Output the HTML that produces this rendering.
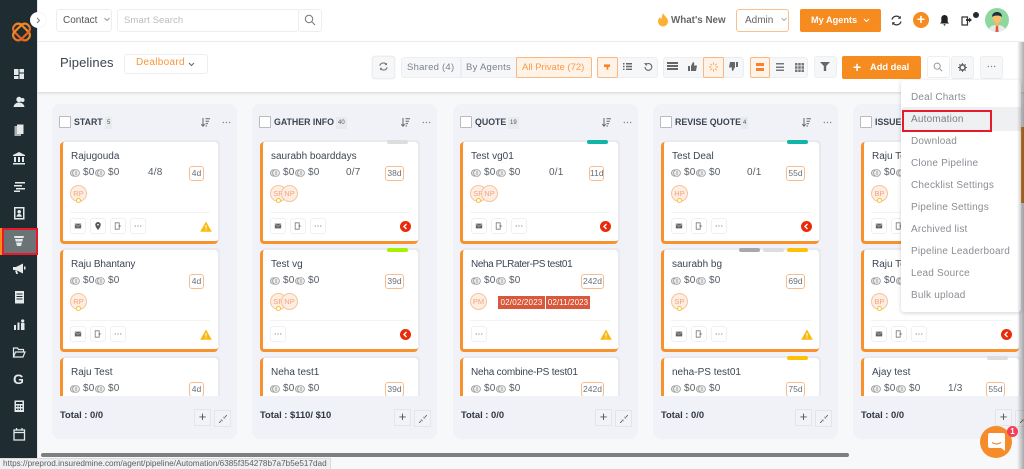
<!DOCTYPE html>
<html><head><meta charset="utf-8"><title>Pipelines</title>
<style>
*{box-sizing:border-box}
html,body{margin:0;padding:0;width:1024px;height:469px;overflow:hidden;background:#f7f8fa;font-family:"Liberation Sans",sans-serif;color:#3b4450}
.a{position:absolute}
.t{position:absolute;white-space:nowrap;line-height:1}
#side{left:0;top:0;width:37px;height:458px;background:#1f2d33}
.si{position:absolute;left:12px;width:14px;height:14px;fill:#e6e9ea}
.box{position:absolute;background:#fff;border:1px solid #eceef1;border-radius:3px}
.tb{position:absolute;background:#f6f7f9;border:1px solid #eceef1}
.on{background:#fff3e8;border:1px solid #f9b783;border-radius:2px}
.col{position:absolute;top:104px;width:185px;height:335px;background:#f0f2f7;border-radius:8px}
.cb{position:absolute;left:7px;top:12px;width:12px;height:12px;background:#fff;border:1px solid #b8bcc2;border-radius:1px}
.h{position:absolute;left:22px;top:14px;font-size:8.8px;font-weight:bold;line-height:1;white-space:nowrap;color:#3b4652}
.n{position:absolute;top:13px;font-size:6px;background:#e8eaee;padding:3px 2px;line-height:1;color:#555}
.clip{position:absolute;left:0;top:36px;width:185px;height:256px;overflow:hidden}
.card{position:absolute;left:8px;width:158px;height:102px;background:#fff;border-left:3px solid #f7922f;border-bottom:3px solid #f7922f;border-radius:4px;box-shadow:2px -2px 0 #e8eaef}
.card.l{border-bottom:0;height:120px}
.card b{position:absolute;left:8px;top:10px;font-weight:normal;font-size:10px;line-height:1;white-space:nowrap;color:#3c4654}
.c{position:absolute;top:26px;width:10px;height:10px}
.d{position:absolute;top:26px;font-size:10px;letter-spacing:.2px;line-height:1;color:#555d67}
.bd{position:absolute;top:24px;height:15px;right:14px;border:1px solid #f9bd8c;border-radius:3px;font-size:8.5px;line-height:13px;text-align:center;color:#68707a;background:#fff}
.av{position:absolute;top:43px;width:17px;height:17px;border-radius:50%;background:#fdeee3;border:1px solid #f9c39a;color:#f8a07a;font-size:7.5px;line-height:15px;text-align:center}
.yd{position:absolute;top:56px;width:5px;height:5px;border-radius:50%;border:1px solid #fbc02d;background:#fff}
.ln{position:absolute;left:7px;right:8px;top:70px;height:1px;background:#f2f3f5}
.ib{position:absolute;top:76px;width:16px;height:16px;background:#fff;border:1px solid #eff0f2;border-radius:3px}
.ib svg{position:absolute;left:3px;top:3px;width:8px;height:8px}
.wn{position:absolute;left:137px;top:79px;width:12px;height:11px}
.bk{position:absolute;left:137px;top:79px;width:11px;height:11px}
.st{position:absolute;top:-2px;width:21px;height:4px;border-radius:2px}
.tot{position:absolute;left:8px;top:306px;font-size:9.4px;font-weight:bold;line-height:1;white-space:nowrap;color:#2f3742}
.fb{position:absolute;width:17px;height:17px;border:1px solid #e3e5e9;background:#f2f3f6;text-align:center;color:#555;font-size:13px;line-height:14px}
.fb svg{position:absolute;left:4px;top:4px;width:8px;height:8px}
.so{position:absolute;left:149px;top:14px;width:9px;height:9px}
.dt{position:absolute;left:170px;top:14px;width:9px;height:9px}
.mi{position:absolute;left:10px;font-size:10px;letter-spacing:.2px;color:#8a8e94;line-height:1;white-space:nowrap}
.tg{position:absolute;font-size:9.5px;letter-spacing:.25px;line-height:1;white-space:nowrap;color:#7b828b}
</style></head><body>
<svg width="0" height="0" style="position:absolute"><defs>
<symbol id="coin" viewBox="0 0 10 10"><circle cx="3.6" cy="5" r="3.2" fill="#ddd" stroke="#9a9a9a" stroke-width=".8"/><circle cx="6" cy="5" r="3.4" fill="#eee" stroke="#9a9a9a" stroke-width=".8"/><path d="M6 3v4" stroke="#888" stroke-width=".8"/></symbol>
<symbol id="mail" viewBox="0 0 10 10"><path d="M1 2h8v6H1z" fill="#666"/><path d="M1 2.5l4 3 4-3" stroke="#fff" stroke-width=".5" fill="none"/></symbol>
<symbol id="pin" viewBox="0 0 10 10"><path d="M5 0a3.4 3.4 0 013.4 3.4C8.4 6 5 10 5 10S1.600 6 1.600 3.400A3.400 3.400 0 015 0z" fill="#555"/><circle cx="5" cy="3.400" r="1.100" fill="#fff"/></symbol>
<symbol id="door" viewBox="0 0 10 10"><path d="M1.500 1h5v8h-5z" fill="none" stroke="#777" stroke-width="1"/><path d="M6 3.500l3 1.500-3 1.500z" fill="#777"/></symbol>
<symbol id="dots" viewBox="0 0 10 10"><circle cx="1.500" cy="5" r=".8" fill="#888"/><circle cx="5" cy="5" r=".8" fill="#888"/><circle cx="8.500" cy="5" r=".8" fill="#888"/></symbol>
<symbol id="warn" viewBox="0 0 12 11"><path d="M6 .5L11.800 10.800H.2z" fill="#fbb80f"/><path d="M5.500 4h1v3.500h-1zM5.500 8.300h1v1h-1z" fill="#fff"/></symbol>
<symbol id="back" viewBox="0 0 11 11"><circle cx="5.500" cy="5.500" r="5.500" fill="#ea2b0a"/><path d="M6.500 3L4 5.500 6.500 8" stroke="#fff" stroke-width="1.400" fill="none"/></symbol>
<symbol id="sort" viewBox="0 0 9 9"><path d="M2 0v8M.3 6.200L2 8.200l1.700-2M4.500 .8H9M4.500 3.200H8M4.500 5.600H7M4.500 8H6" stroke="#666" stroke-width="1" fill="none"/></symbol>
<symbol id="cmp" viewBox="0 0 8 8"><path d="M8 0L6 2M0 8l2-2" stroke="#666" stroke-width=".9"/><path d="M4.600 3.400V1.400L6.600 3.400zM3.400 4.600V6.600L1.400 4.600z" fill="#666"/></symbol>
</defs></svg>

<!-- top bar -->
<div class="a" style="left:37px;top:0;width:987px;height:42px;background:#fff;border-bottom:1px solid #f1f2f4"></div>
<div class="box" style="left:56px;top:9px;width:56px;height:23px"></div>
<div class="t" style="left:63px;top:16px;font-size:10px;color:#555">Contact</div>
<svg class="a" style="left:104px;top:17px" width="6" height="5"><path d="M.5 1l2.500 2.500L5.500 1" stroke="#999" fill="none"/></svg>
<div class="box" style="left:117px;top:9px;width:182px;height:23px"></div>
<div class="t" style="left:124px;top:16px;font-size:9.5px;letter-spacing:.1px;color:#b8bbbf">Smart Search</div>
<div class="box" style="left:298px;top:9px;width:24px;height:23px"></div>
<svg class="a" style="left:304px;top:14px" width="12" height="12" viewBox="0 0 12 12"><circle cx="5" cy="5" r="3.700" stroke="#777" fill="none"/><path d="M7.800 7.800L11 11" stroke="#777"/></svg>

<svg class="a" style="left:657px;top:13px" width="12" height="14" viewBox="0 0 12 14"><path d="M6 0c1 3 5 4.500 5 8.500A5 5 0 011 8.500C1 6.500 2 5.500 3 4c.3 1 .8 1.500 1.500 2C5 4 5 2 6 0z" fill="#fbb034"/></svg>
<div class="t" style="left:671px;top:16px;font-size:9.8px;font-weight:bold;color:#666">What's New</div>
<div class="box" style="left:736px;top:9px;width:53px;height:23px;border-color:#f9c08e"></div>
<div class="t" style="left:745px;top:16px;font-size:10px;color:#666">Admin</div>
<svg class="a" style="left:781px;top:17px" width="6" height="5"><path d="M.5 1l2.500 2.500L5.500 1" stroke="#aaa" fill="none"/></svg>
<div class="a" style="left:800px;top:9px;width:81px;height:23px;background:#f68b1f;border-radius:2px"></div>
<div class="t" style="left:811px;top:16px;font-size:9.2px;font-weight:bold;color:#fff">My Agents</div>
<svg class="a" style="left:863px;top:18px" width="7" height="5"><path d="M1 1l2.500 2.500L6 1" stroke="#fff" fill="none"/></svg>
<svg class="a" style="left:891px;top:15px" width="11" height="11" viewBox="0 0 11 11"><path d="M1 4.500A4.500 4.500 0 019 3M10 6.500A4.500 4.500 0 012 8" stroke="#333" stroke-width="1.300" fill="none"/><path d="M9.800 .8v3h-3zM1.200 10.200v-3h3z" fill="#333"/></svg>
<div class="a" style="left:913px;top:12px;width:16px;height:16px;border-radius:50%;background:#f68b1f;color:#fff;font-size:14px;line-height:15px;text-align:center;font-weight:bold">+</div>
<svg class="a" style="left:940px;top:15px" width="9" height="11" viewBox="0 0 9 11"><path d="M4.500 0a3.200 3.200 0 013.200 3.200V7L9 8.500H0L1.300 7V3.200A3.200 3.200 0 014.500 0zM3.300 9.300h2.400L4.500 11z" fill="#222"/></svg>
<svg class="a" style="left:961px;top:15px" width="11" height="11" viewBox="0 0 11 11"><path d="M1 2h5.500v8H1z" fill="none" stroke="#333" stroke-width="1.200"/><path d="M5 4h3V2.500L11 5 8 7.500V6H5z" fill="#333"/></svg>
<div class="a" style="left:973px;top:12px;width:6px;height:6px;border-radius:50%;background:#1d2b36"></div>
<svg class="a" style="left:985px;top:8px" width="24" height="24" viewBox="0 0 24 24"><defs><clipPath id="ac"><circle cx="12" cy="12" r="12"/></clipPath></defs><g clip-path="url(#ac)"><rect width="24" height="24" fill="#8ed8a0"/><path d="M3 24c1-6 5-7 9-7s8 1 9 7z" fill="#e8ebee"/><path d="M11 17h2l.600 7h-3.200z" fill="#e4573d"/><rect x="10" y="13" width="4" height="5" fill="#f4b860"/><circle cx="12" cy="10" r="4.500" fill="#f8c06c"/><path d="M7 9c0-4 3-5 5-5s5 1 5 5c-2-2-8-2-10 0z" fill="#1e3042"/></g></svg>

<!-- sub header -->
<div class="a" style="left:37px;top:42px;width:987px;height:50px;background:#fff;box-shadow:0 1px 3px rgba(0,0,0,.15)"></div>
<div class="t" style="left:60px;top:56px;font-size:13px;letter-spacing:.1px;color:#3a434e">Pipelines</div>
<div class="box" style="left:124px;top:54px;width:84px;height:20px"></div>
<div class="t" style="left:136px;top:58px;font-size:10px;letter-spacing:.3px;color:#f9943b">Dealboard</div>
<svg class="a" style="left:188px;top:62px" width="7" height="5"><path d="M1 1l2.500 2.500L6 1" stroke="#666" fill="none"/></svg>

<div class="tb" style="left:372px;top:56px;width:23px;height:23px;border-radius:3px;box-shadow:0 0 1px rgba(0,0,0,.2)"></div>
<svg class="a" style="left:379px;top:62px" width="9" height="9" viewBox="0 0 11 11"><path d="M1 4.500A4.500 4.500 0 019 3M10 6.500A4.500 4.500 0 012 8" stroke="#777" stroke-width="1.300" fill="none"/><path d="M9.800 .8v3h-3zM1.200 10.200v-3h3z" fill="#777"/></svg>
<div class="tb" style="left:401px;top:57px;width:60px;height:21px;border-radius:3px 0 0 3px"></div>
<div class="tb" style="left:461px;top:57px;width:56px;height:21px"></div>
<div class="tg" style="left:407px;top:63px">Shared (4)</div>
<div class="tg" style="left:466px;top:63px">By Agents</div>
<div class="a on" style="left:516px;top:57px;width:76px;height:21px"></div>
<div class="tg" style="left:522px;top:63px;color:#f99a4c;letter-spacing:0">All Private (72)</div>

<div class="tb" style="left:597px;top:57px;width:61px;height:21px;border-radius:3px"></div>
<div class="a on" style="left:597px;top:57px;width:21px;height:21px"></div>
<svg class="a" style="left:604px;top:64px" width="6" height="6" viewBox="0 0 7 6"><path d="M0 0h7v3H5v3H3V3H0z" fill="#f7822a"/></svg>
<svg class="a" style="left:623px;top:62px" width="9" height="9" viewBox="0 0 9 9"><path d="M0 1h1.500v1.500H0zM3 1h6v1.500H3zM0 3.800h1.500v1.500H0zM3 3.800h6v1.500H3zM0 6.600h1.500V8H0zM3 6.600h6V8H3z" fill="#666"/></svg>
<svg class="a" style="left:644px;top:62px" width="9" height="9" viewBox="0 0 9 9"><path d="M2 2.500a3.400 3.400 0 11-1 2.500" stroke="#666" stroke-width="1.100" fill="none"/><path d="M0 1l3 .3-.5 3z" fill="#666"/></svg>

<div class="tb" style="left:663px;top:57px;width:81px;height:21px;border-radius:3px"></div>
<div class="a" style="left:667px;top:62px;width:11px;height:9px;background:repeating-linear-gradient(#666 0 2px,#f6f7f9 2px 3px)"></div>
<svg class="a" style="left:688px;top:62px" width="9" height="9" viewBox="0 0 9 9"><path d="M0 4h2v5H0zM3 9V4l2-4c1 0 1.500 1 1 3.500h3L8 9z" fill="#666"/></svg>
<div class="a on" style="left:703px;top:57px;width:21px;height:21px"></div>
<svg class="a" style="left:709px;top:62px" width="9" height="10" viewBox="0 0 10 10"><path d="M5 0v2.500M5 7.500V10M0 5h2.500M7.500 5H10M1.500 1.500l1.800 1.800M6.700 6.700l1.800 1.800M8.500 1.500L6.700 3.300M3.300 6.700L1.500 8.500" stroke="#f8a15a" fill="none"/></svg>
<svg class="a" style="left:729px;top:62px" width="9" height="9" viewBox="0 0 9 9"><path d="M9 5H7V0h2zM6 0v5L4 9C3 9 2.500 8 3 5.500H0L1 0z" fill="#666"/></svg>

<div class="tb" style="left:750px;top:57px;width:58px;height:21px;border-radius:3px"></div>
<div class="a on" style="left:750px;top:57px;width:20px;height:21px"></div>
<div class="a" style="left:756px;top:63px;width:8px;height:3px;background:#f7822a"></div>
<div class="a" style="left:756px;top:68px;width:8px;height:3px;background:#f7822a"></div>
<div class="a" style="left:776px;top:63px;width:8px;height:9px;background:repeating-linear-gradient(#777 0 1.500px,#f6f7f9 1.500px 3.300px)"></div>
<svg class="a" style="left:795px;top:63px" width="9" height="9" viewBox="0 0 9 9"><path d="M0 0h2.500v2.500H0zM3.250 0h2.500v2.500h-2.500zM6.500 0H9v2.500H6.500zM0 3.250h2.500v2.500H0zM3.250 3.250h2.500v2.500h-2.500zM6.500 3.250H9v2.500H6.500zM0 6.500h2.500V9H0zM3.250 6.500h2.500V9h-2.500zM6.500 6.500H9V9H6.500z" fill="#777"/></svg>

<div class="tb" style="left:814px;top:56px;width:23px;height:22px;border-radius:3px"></div>
<svg class="a" style="left:820px;top:62px" width="10" height="9" viewBox="0 0 10 9"><path d="M0 0h10L6.200 4v5H3.800V4z" fill="#666"/></svg>
<div class="a" style="left:842px;top:56px;width:79px;height:23px;background:#f68b1f;border-radius:2px"></div>
<div class="t" style="left:853px;top:60px;font-size:14px;font-weight:bold;color:#fff">+</div>
<div class="t" style="left:870px;top:63px;font-size:9.3px;font-weight:bold;color:#fff">Add deal</div>
<div class="box" style="left:927px;top:56px;width:23px;height:22px"></div>
<svg class="a" style="left:933px;top:62px" width="10" height="10" viewBox="0 0 12 12"><circle cx="5" cy="5" r="3.700" stroke="#888" fill="none"/><path d="M7.800 7.800L11 11" stroke="#888"/></svg>
<div class="tb" style="left:951px;top:56px;width:23px;height:23px;border-radius:3px"></div>
<svg class="a" style="left:958px;top:63px" width="9" height="9" viewBox="0 0 9 9"><circle cx="4.500" cy="4.500" r="2.600" stroke="#666" stroke-width="1.700" fill="none"/><path d="M4.500 0v1.500M4.500 7.500V9M0 4.500h1.500M7.500 4.500H9M1.300 1.300l1 1M6.700 6.700l1 1M7.700 1.300l-1 1M2.300 6.700l-1 1" stroke="#666"/></svg>
<div class="tb" style="left:980px;top:56px;width:23px;height:23px;border-radius:3px"></div>
<svg class="a" style="left:987px;top:62px;width:9px;height:9px"><use href="#dots"/></svg>

<!-- columns -->
<div class="col" style="left:52px">
<div class="cb"></div><div class="h">START</div><div class="n" style="left:53px">5</div>
<svg class="so"><use href="#sort"/></svg><svg class="dt"><use href="#dots"/></svg>
<div class="clip">
<div class="card" style="top:2px"><b>Rajugouda</b><svg class="c" style="left:7px"><use href="#coin"/></svg><span class="d" style="left:20px">$0</span><svg class="c" style="left:32px"><use href="#coin"/></svg><span class="d" style="left:45px">$0</span><span class="d" style="left:85px">4/8</span><div class="bd" style="width:15px">4d</div><div class="av" style="left:7px">RP</div><div class="yd" style="left:13px"></div><div class="ln"></div><div class="ib" style="left:7px"><svg><use href="#mail"/></svg></div><div class="ib" style="left:27px"><svg><use href="#pin"/></svg></div><div class="ib" style="left:47px"><svg><use href="#door"/></svg></div><div class="ib" style="left:67px"><svg><use href="#dots"/></svg></div><svg class="wn"><use href="#warn"/></svg></div>
<div class="card" style="top:110px"><b style="letter-spacing:-.1px">Raju Bhantany</b><svg class="c" style="left:7px"><use href="#coin"/></svg><span class="d" style="left:20px">$0</span><svg class="c" style="left:32px"><use href="#coin"/></svg><span class="d" style="left:45px">$0</span><div class="bd" style="width:15px">4d</div><div class="av" style="left:7px">RP</div><div class="yd" style="left:13px"></div><div class="ln"></div><div class="ib" style="left:7px"><svg><use href="#mail"/></svg></div><div class="ib" style="left:27px"><svg><use href="#door"/></svg></div><div class="ib" style="left:47px"><svg><use href="#dots"/></svg></div><svg class="wn"><use href="#warn"/></svg></div>
<div class="card l" style="top:218px"><b>Raju Test</b><svg class="c" style="left:7px"><use href="#coin"/></svg><span class="d" style="left:20px">$0</span><svg class="c" style="left:32px"><use href="#coin"/></svg><span class="d" style="left:45px">$0</span><div class="bd" style="width:15px">4d</div></div>
</div>
<div class="tot">Total : 0/0</div><div class="fb" style="left:142px;top:305px">+</div><div class="fb" style="left:162px;top:306px"><svg><use href="#cmp"/></svg></div>
</div>

<div class="col" style="left:252px">
<div class="cb"></div><div class="h">GATHER INFO</div><div class="n" style="left:84px">40</div>
<svg class="so"><use href="#sort"/></svg><svg class="dt"><use href="#dots"/></svg>
<div class="clip">
<div class="card" style="top:2px"><div class="st" style="left:124px;background:#dddddd"></div><b>saurabh boarddays</b><svg class="c" style="left:7px"><use href="#coin"/></svg><span class="d" style="left:20px">$0</span><svg class="c" style="left:32px"><use href="#coin"/></svg><span class="d" style="left:45px">$0</span><span class="d" style="left:83px">0/7</span><div class="bd" style="width:19px">38d</div><div class="av" style="left:7px">SR</div><div class="yd" style="left:13px"></div><div class="av" style="left:18px">NP</div><div class="ln"></div><div class="ib" style="left:7px"><svg><use href="#mail"/></svg></div><div class="ib" style="left:27px"><svg><use href="#door"/></svg></div><div class="ib" style="left:47px"><svg><use href="#dots"/></svg></div><svg class="bk"><use href="#back"/></svg></div>
<div class="card" style="top:110px"><div class="st" style="left:124px;background:#a6f000"></div><b>Test vg</b><svg class="c" style="left:7px"><use href="#coin"/></svg><span class="d" style="left:20px">$0</span><svg class="c" style="left:32px"><use href="#coin"/></svg><span class="d" style="left:45px">$0</span><div class="bd" style="width:19px">39d</div><div class="av" style="left:7px">SR</div><div class="yd" style="left:13px"></div><div class="av" style="left:18px">NP</div><div class="ln"></div><div class="ib" style="left:7px"><svg><use href="#dots"/></svg></div><svg class="bk"><use href="#back"/></svg></div>
<div class="card l" style="top:218px"><b>Neha test1</b><svg class="c" style="left:7px"><use href="#coin"/></svg><span class="d" style="left:20px">$0</span><svg class="c" style="left:32px"><use href="#coin"/></svg><span class="d" style="left:45px">$0</span><div class="bd" style="width:19px">39d</div></div>
</div>
<div class="tot">Total : $110/ $10</div><div class="fb" style="left:142px;top:305px">+</div><div class="fb" style="left:162px;top:306px"><svg><use href="#cmp"/></svg></div>
</div>

<div class="col" style="left:453px">
<div class="cb"></div><div class="h">QUOTE</div><div class="n" style="left:55px">19</div>
<svg class="so"><use href="#sort"/></svg><svg class="dt"><use href="#dots"/></svg>
<div class="clip" style="left:-1px">
<div class="card" style="top:2px"><div class="st" style="left:124px;background:#10b5a8"></div><b>Test vg01</b><svg class="c" style="left:8px"><use href="#coin"/></svg><span class="d" style="left:21px">$0</span><svg class="c" style="left:33px"><use href="#coin"/></svg><span class="d" style="left:46px">$0</span><span class="d" style="left:86px">0/1</span><div class="bd" style="width:15px">11d</div><div class="av" style="left:7px">SR</div><div class="yd" style="left:13px"></div><div class="av" style="left:18px">NP</div><div class="ln"></div><div class="ib" style="left:8px"><svg><use href="#mail"/></svg></div><div class="ib" style="left:28px"><svg><use href="#door"/></svg></div><div class="ib" style="left:48px"><svg><use href="#dots"/></svg></div><svg class="bk"><use href="#back"/></svg></div>
<div class="card" style="top:110px"><b style="letter-spacing:-.4px">Neha PLRater-PS test01</b><svg class="c" style="left:8px"><use href="#coin"/></svg><span class="d" style="left:21px">$0</span><svg class="c" style="left:33px"><use href="#coin"/></svg><span class="d" style="left:46px">$0</span><div class="bd" style="width:23px">242d</div><div class="av" style="left:7px">PM</div><div class="t" style="left:35px;top:46px;width:47px;height:13px;background:#d9573a;color:#fff;font-size:8px;line-height:13px;text-align:center;letter-spacing:.2px">02/02/2023</div><div class="t" style="left:83px;top:46px;width:44px;height:13px;background:#d9573a;color:#fff;font-size:8px;line-height:13px;text-align:center;letter-spacing:.1px">02/11/2023</div><div class="ln"></div><div class="ib" style="left:8px"><svg><use href="#dots"/></svg></div><svg class="wn"><use href="#warn"/></svg></div>
<div class="card l" style="top:218px"><b style="letter-spacing:-.2px">Neha combine-PS test01</b><svg class="c" style="left:8px"><use href="#coin"/></svg><span class="d" style="left:21px">$0</span><svg class="c" style="left:33px"><use href="#coin"/></svg><span class="d" style="left:46px">$0</span><div class="bd" style="width:23px">242d</div></div>
</div>
<div class="tot">Total : 0/0</div><div class="fb" style="left:142px;top:305px">+</div><div class="fb" style="left:162px;top:306px"><svg><use href="#cmp"/></svg></div>
</div>

<div class="col" style="left:653px">
<div class="cb"></div><div class="h">REVISE QUOTE</div><div class="n" style="left:88px">4</div>
<svg class="so"><use href="#sort"/></svg><svg class="dt"><use href="#dots"/></svg>
<div class="clip">
<div class="card" style="top:2px"><div class="st" style="left:123px;background:#10b5a8"></div><b>Test Deal</b><svg class="c" style="left:7px"><use href="#coin"/></svg><span class="d" style="left:20px">$0</span><svg class="c" style="left:32px"><use href="#coin"/></svg><span class="d" style="left:45px">$0</span><span class="d" style="left:83px">0/1</span><div class="bd" style="width:19px">55d</div><div class="av" style="left:7px">HP</div><div class="yd" style="left:13px"></div><div class="ln"></div><div class="ib" style="left:7px"><svg><use href="#mail"/></svg></div><div class="ib" style="left:27px"><svg><use href="#door"/></svg></div><div class="ib" style="left:47px"><svg><use href="#dots"/></svg></div><svg class="bk"><use href="#back"/></svg></div>
<div class="card" style="top:110px"><div class="st" style="left:75px;background:#a8a8a8"></div><div class="st" style="left:99px;background:#dddddd"></div><div class="st" style="left:123px;background:#ffc107"></div><b>saurabh bg</b><svg class="c" style="left:7px"><use href="#coin"/></svg><span class="d" style="left:20px">$0</span><svg class="c" style="left:32px"><use href="#coin"/></svg><span class="d" style="left:45px">$0</span><div class="bd" style="width:19px">69d</div><div class="av" style="left:7px">SP</div><div class="yd" style="left:13px"></div><div class="ln"></div><div class="ib" style="left:7px"><svg><use href="#mail"/></svg></div><div class="ib" style="left:27px"><svg><use href="#door"/></svg></div><div class="ib" style="left:47px"><svg><use href="#dots"/></svg></div><svg class="wn"><use href="#warn"/></svg></div>
<div class="card l" style="top:218px"><div class="st" style="left:123px;background:#ffc107"></div><b>neha-PS test01</b><svg class="c" style="left:7px"><use href="#coin"/></svg><span class="d" style="left:20px">$0</span><svg class="c" style="left:32px"><use href="#coin"/></svg><span class="d" style="left:45px">$0</span><div class="bd" style="width:19px">75d</div></div>
</div>
<div class="tot">Total : 0/0</div><div class="fb" style="left:142px;top:305px">+</div><div class="fb" style="left:162px;top:306px"><svg><use href="#cmp"/></svg></div>
</div>

<div class="col" style="left:853px">
<div class="cb"></div><div class="h">ISSUE</div>
<div class="clip">
<div class="card" style="top:2px"><b>Raju Test</b><svg class="c" style="left:7px"><use href="#coin"/></svg><span class="d" style="left:20px">$0</span><svg class="c" style="left:32px"><use href="#coin"/></svg><div class="av" style="left:7px">BP</div><div class="yd" style="left:13px"></div><div class="ln"></div><div class="ib" style="left:7px"><svg><use href="#mail"/></svg></div><div class="ib" style="left:27px"><svg><use href="#door"/></svg></div></div>
<div class="card" style="top:110px"><b>Raju Test</b><svg class="c" style="left:7px"><use href="#coin"/></svg><span class="d" style="left:20px">$0</span><svg class="c" style="left:32px"><use href="#coin"/></svg><div class="av" style="left:7px">BP</div><div class="yd" style="left:13px"></div><div class="ln"></div><div class="ib" style="left:7px"><svg><use href="#mail"/></svg></div><div class="ib" style="left:27px"><svg><use href="#door"/></svg></div><div class="ib" style="left:47px"><svg><use href="#dots"/></svg></div><svg class="bk"><use href="#back"/></svg></div>
<div class="card l" style="top:218px"><div class="st" style="left:123px;background:#dddddd"></div><b>Ajay test</b><svg class="c" style="left:7px"><use href="#coin"/></svg><span class="d" style="left:20px">$0</span><svg class="c" style="left:32px"><use href="#coin"/></svg><span class="d" style="left:45px">$0</span><span class="d" style="left:84px">1/3</span><div class="bd" style="width:19px">55d</div></div>
</div>
<div class="tot">Total : 0/0</div><div class="fb" style="left:142px;top:305px">+</div><div class="fb" style="left:162px;top:306px"><svg><use href="#cmp"/></svg></div>
</div>

<!-- scrollbar -->
<div class="a" style="left:41px;top:453px;width:808px;height:4px;background:#7d7f81;border-radius:2px"></div>

<!-- dropdown -->
<div class="a" style="left:901px;top:80px;width:120px;height:232px;background:#fff;border-radius:3px;box-shadow:0 1px 4px rgba(0,0,0,.18)">
<div class="a" style="left:1px;top:27px;width:119px;height:24px;background:#eff0f2"></div>
<div class="mi" style="top:13px">Deal Charts</div>
<div class="mi" style="top:35px;color:#7b8087">Automation</div>
<div class="mi" style="top:57px">Download</div>
<div class="mi" style="top:79px">Clone Pipeline</div>
<div class="mi" style="top:101px">Checklist Settings</div>
<div class="mi" style="top:123px">Pipeline Settings</div>
<div class="mi" style="top:145px">Archived list</div>
<div class="mi" style="top:167px">Pipeline Leaderboard</div>
<div class="mi" style="top:189px">Lead Source</div>
<div class="mi" style="top:211px">Bulk upload</div>
<div class="a" style="left:1px;top:30px;width:90px;height:22px;border:2px solid #e8192c"></div>
</div>

<!-- right edge shade -->
<div class="a" style="left:1021px;top:127px;width:3px;height:76px;background:#d9822b"></div>
<div class="a" style="left:1017px;top:42px;width:7px;height:427px;background:linear-gradient(90deg,rgba(0,0,0,0),rgba(0,0,0,.32))"></div>

<!-- chat -->
<div class="a" style="left:980px;top:426px;width:32px;height:32px;border-radius:50%;background:#f68b2a"></div>
<svg class="a" style="left:988px;top:433px" width="17" height="18" viewBox="0 0 17 18"><path d="M2 0h13a2 2 0 012 2v16l-4-3H2a2 2 0 01-2-2V2a2 2 0 012-2z" fill="#fff"/><path d="M4 9.500c3 2 6 2 9 0" stroke="#f68b2a" stroke-width="1.200" fill="none"/></svg>
<div class="a" style="left:1007px;top:426px;width:11px;height:11px;border-radius:50%;background:#f0405a;color:#fff;font-size:8px;line-height:11px;font-weight:bold;text-align:center">1</div>

<!-- sidebar -->
<div id="side" class="a">
<svg class="a" style="left:10px;top:21px" width="23" height="22" viewBox="0 0 22 22" fill="none" stroke-width="2.200"><defs><linearGradient id="lg" gradientUnits="userSpaceOnUse" x1="0" y1="0" x2="0" y2="22"><stop offset="0" stop-color="#f39a23"/><stop offset=".55" stop-color="#ee7a24"/><stop offset="1" stop-color="#d8401f"/></linearGradient></defs><rect x="1.500" y="6" width="19" height="10" rx="4.500" transform="rotate(45 11 11)" stroke="url(#lg)"/><rect x="1.500" y="6" width="19" height="10" rx="4.500" transform="rotate(-45 11 11)" stroke="url(#lg)"/></svg>
<div class="a" style="left:0;top:228px;width:2px;height:27px;background:#f68b1f"></div>
<div class="a" style="left:2px;top:228px;width:36px;height:27px;background:#6b7375;border:2px solid #e8192c;z-index:3"></div>
<svg class="si" style="top:67px" viewBox="0 0 14 14"><path d="M2 2h4.500v6H2zM7.500 2H12v3.500H7.500zM7.500 6.500H12V12H7.500zM2 9h4.500v3H2z"/></svg>
<svg class="si" style="top:95px" viewBox="0 0 14 14"><circle cx="7" cy="4.500" r="2.700"/><circle cx="10.500" cy="5" r="2"/><path d="M1.500 12c.5-3 3-4.500 5.500-4.500S12 9 12.500 12z"/></svg>
<svg class="si" style="top:123px" viewBox="0 0 14 14"><path d="M2.500 3H9v10H2.500z" opacity=".7"/><path d="M5 1.500h6.500V11H5z"/></svg>
<svg class="si" style="top:151px" viewBox="0 0 14 14"><path d="M7 1l6 3v1H1V4zM2 6h2v5H2zM6 6h2v5H6zM10 6h2v5h-2zM1 12h12v1.500H1z"/></svg>
<svg class="si" style="top:179px" viewBox="0 0 14 14"><path d="M3 3h10v1.500H3zM2 6h8v1.500H2zM4 9h9v1.500H4zM2 11.500h6V13H2z"/></svg>
<svg class="si" style="top:206px" viewBox="0 0 14 14"><path d="M2 1h10.500v12.500H2zM3.500 2.500v9.500h7.500V2.500z" fill-rule="evenodd"/><circle cx="7.200" cy="5.800" r="1.800"/><path d="M4.500 10.800c.3-2 1.500-2.800 2.700-2.800s2.400.8 2.700 2.800z"/></svg>
<svg class="si" style="top:234px;z-index:4" viewBox="0 0 14 14"><path d="M2 2h10l-.5 2h-9zM3 5h8l-.7 2.500H3.700zM4 8.500h6L9 12H5z"/></svg>
<svg class="si" style="top:262px" viewBox="0 0 14 14"><path d="M1 5h3l7-3.500v10L4 8H1zM3 8.500h2l1 3.500H4.200zM12 4.500h1.500v3H12z"/></svg>
<svg class="si" style="top:290px" viewBox="0 0 14 14"><path d="M3 1h9v12.500H3zM4.500 3.500v1h6v-1zM4.500 6v1h6V6zM4.500 8.500v1h6v-1z" fill-rule="evenodd"/></svg>
<svg class="si" style="top:318px" viewBox="0 0 14 14"><path d="M2 7h2v5H2zM5.500 4.500h2V12h-2zM9 5h3.500v7H9z"/><circle cx="10.700" cy="3" r="1.600"/></svg>
<svg class="si" style="top:345px;fill:none;stroke:#e6e9ea;stroke-width:1.200" viewBox="0 0 14 14"><path d="M1.500 12V3h4l1 1.500h5V7M1.500 12L3.500 7H13l-2 5z"/></svg>
<div class="t" style="left:13px;top:372px;font-size:14px;font-weight:bold;color:#e6e9ea">G</div>
<svg class="si" style="top:399px" viewBox="0 0 14 14"><path d="M2.500 1.500h9.500v11.500H2.500zM4 3v2h6.500V3zM4 6.500V8h1.500V6.500zM6.500 6.500V8H8V6.500zM9 6.500V8h1.500V6.500zM4 9.500V11h1.500V9.500zM6.500 9.500V11H8V9.500zM9 9.500V11h1.500V9.500z" fill-rule="evenodd"/></svg>
<svg class="si" style="top:427px;fill:none;stroke:#e6e9ea;stroke-width:1.300" viewBox="0 0 14 14"><path d="M2 3h10.500v10H2zM2 5.500h10.500M4.500 1v2.500M10 1v2.500"/></svg>
</div>
<div class="a" style="left:37px;top:0;width:1px;height:458px;background:#e6e7e9"></div>
<div class="a" style="left:30px;top:12px;width:16px;height:16px;border-radius:50%;background:#fff;box-shadow:0 0 1px rgba(0,0,0,.2);z-index:5"></div>
<svg class="a" style="left:36px;top:17px;z-index:6" width="5" height="7"><path d="M1 1l2.500 2.500L1 6" stroke="#777" fill="none"/></svg>

<!-- status bar -->
<div class="a" style="left:0;top:458px;width:331px;height:11px;background:#eeeff0;border-top:1px solid #dcdcdc;border-right:1px solid #dcdcdc"></div>
<div class="t" style="left:3px;top:460px;font-size:8.2px;color:#5a5f64;z-index:7">https://preprod.insuredmine.com/agent/pipeline/Automation/6385f354278b7a7b5e517dad</div>
</body></html>
